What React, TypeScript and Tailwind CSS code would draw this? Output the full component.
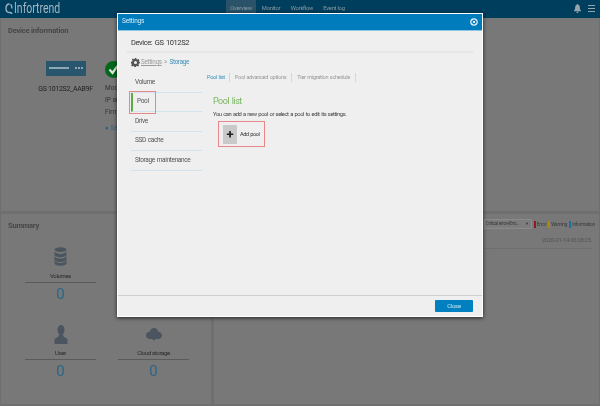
import React from "react";

function Stat({ label, icon }: { label: string; icon: React.ReactNode }) {
  return (
    <div className="flex w-[71px] flex-col items-center">
      <div className="flex h-[22px] items-center justify-center">{icon}</div>
      <div className="mt-[3px] h-[10px] text-[6px] leading-[10px] tracking-[-0.35px] text-[#2a2a2a]">{label}</div>
      <div className="mt-[1px] h-px w-full bg-[#5a5a5a]" />
      <div className="mt-[1px] text-[15px] leading-[20px] text-[#2a6685]">0</div>
    </div>
  );
}

function Db() {
  return (
    <svg width="13" height="19" viewBox="0 0 13 19" fill="#4a5560">
      <ellipse cx="6.5" cy="2.6" rx="6" ry="2.4" />
      <path d="M.5 4.6c1 1.6 3.4 2.3 6 2.3s5-.7 6-2.3v3.2c0 1.4-2.7 2.5-6 2.5s-6-1.1-6-2.5z" />
      <path d="M.5 9.2c1 1.6 3.4 2.3 6 2.3s5-.7 6-2.3v3.2c0 1.4-2.7 2.5-6 2.5s-6-1.1-6-2.5z" />
      <path d="M.5 13.6c1 1.6 3.4 2.3 6 2.3s5-.7 6-2.3v2.6c0 1.4-2.7 2.5-6 2.5s-6-1.1-6-2.5z" />
    </svg>
  );
}

export default function App() {
  return (
    <div className="relative h-[406px] w-[600px] overflow-hidden bg-[#787878] font-['Roboto',sans-serif] blur-[0.3px]">
      {/* top bar */}
      <header className="flex h-[17.5px] items-center bg-[#003e5e]">
        <div className="ml-[5px] flex w-[221px] items-center text-[#a3b6c2]">
          <svg width="8" height="11" viewBox="0 0 8 11" fill="none" stroke="#a3b6c2" strokeWidth="1.300">
            <path d="M4.500 1C2.300 1 1 2.800 1 5.500S2.300 9.500 4.500 9.500c1 0 2 .6 2.800 1.200M5.500 1.200C6.600 2 7 3.500 7 5.500" />
          </svg>
          <span className="ml-[1px] inline-block origin-left scale-x-[0.75] text-[14px] leading-[17px]">Infortrend</span>
        </div>
        <nav className="flex h-full text-[5.800px] tracking-[-0.25px] text-[#8a9aa4]">
          <span className="flex w-[30px] items-center justify-center bg-[#2a5268]">Overview</span>
          <span className="flex w-[30px] items-center justify-center">Monitor</span>
          <span className="flex w-[32px] items-center justify-center">Workflow</span>
          <span className="flex w-[32px] items-center justify-center">Event log</span>
        </nav>
        <div className="ml-auto mr-[5px] flex items-center gap-[7px]">
          <svg width="7" height="9" viewBox="0 0 7 9" fill="#97a4ac">
            <path d="M3.5 0c.5 0 .8.3.8.8C5.4 1.200 5.800 2 5.800 3.200c0 1.800.4 2.500 1.200 3.400v.6H0v-.6c.8-.9 1.200-1.600 1.200-3.400C1.200 2 1.600 1.200 2.700.8c0-.5.3-.8.800-.8zM2.500 7.700h2c0 .8-.4 1.300-1 1.300s-1-.5-1-1.300z" />
          </svg>
          <div className="flex h-[7px] w-[7px] flex-col justify-between">
            <div className="h-px w-full bg-[#97a4ac]" />
            <div className="h-px w-full bg-[#97a4ac]" />
            <div className="h-px w-full bg-[#97a4ac]" />
          </div>
        </div>
      </header>

      {/* dashboard */}
      <main className="grid h-[388.5px] grid-cols-[209.5px_1fr] grid-rows-[193.500px_1fr] gap-[3px] bg-[#6f6f6f] px-[1px] pb-[2px]">
        <section className="col-span-2 flex flex-col bg-[#787878] px-[7px] pt-[7px]">
          <h2 className="text-[7.500px] font-bold leading-[11px] tracking-[-0.2px] text-[#474747]">Device information</h2>
          <div className="mt-[25px] flex">
            <div className="ml-[30px] flex w-[55px] flex-col items-center">
              <div className="flex h-[15px] w-[40px] items-center justify-between bg-[#27566e] px-[3px]">
                <div className="h-[1.500px] w-[20px] bg-[#8fa6b3]" />
                <div className="flex gap-[1px]">
                  <div className="h-[2px] w-[2px] bg-[#8fa6b3]" />
                  <div className="h-[2px] w-[2px] bg-[#8fa6b3]" />
                  <div className="h-[2px] w-[2px] bg-[#8fa6b3]" />
                </div>
              </div>
              <div className="mt-[8px] whitespace-nowrap text-[7px] leading-[10px] tracking-[-0.3px] text-[#222]">GS 1012S2_AAB9F</div>
            </div>
            <div className="ml-[12px] flex flex-col text-[6.500px] leading-[12px] text-[#333]">
              <svg width="17" height="17" viewBox="0 0 17 17">
                <circle cx="8.500" cy="8.500" r="8.500" fill="#03671c" />
                <path d="M4.500 8.500l3 3.500 5-7" fill="none" stroke="#dfe8df" strokeWidth="2.200" />
              </svg>
              <div className="mt-[4px]">Model</div>
              <div>IP address</div>
              <div>Firmware</div>
              <div className="mt-[4px] text-[#2a6685]">● Settings</div>
            </div>
          </div>
        </section>

        <section className="bg-[#787878] px-[7px] pt-[5.500px]">
          <h2 className="text-[7.500px] font-bold leading-[11px] tracking-[-0.2px] text-[#474747]">Summary</h2>
          <div className="ml-[17px] mt-[15px] grid w-[164px] grid-cols-[71px_71px] gap-x-[22px] gap-y-[19.500px]">
            <Stat label="Volumes" icon={<Db />} />
            <Stat label="" icon={null} />
            <Stat
              label="User"
              icon={
                <svg width="14" height="19" viewBox="0 0 14 19" fill="#4a5560">
                  <ellipse cx="7" cy="5" rx="3.500" ry="5" />
                  <path d="M5 9.500h4l.5 2 4 2.500v5H.5v-5l4-2.500z" />
                </svg>
              }
            />
            <Stat
              label="Cloud storage"
              icon={
                <svg width="16" height="13" viewBox="0 0 16 13" fill="#4a5560">
                  <path d="M8 0c2.200 0 3.800 1.500 4 3.500 2.200.2 4 1.800 4 4S14.300 11 12 11H9.500L8 13 6.500 11H4C1.700 11 0 9.700 0 7.500s1.800-3.800 4-4C4.200 1.500 5.800 0 8 0z" />
                </svg>
              }
            />
          </div>
        </section>

        <section className="flex flex-col bg-[#787878] pr-[4px] pt-[5px]">
          <div className="flex items-center justify-end gap-[2px] text-[4.700px] tracking-[-0.15px] text-[#3a3a3a]">
            <div className="flex h-[10px] w-[48px] items-center justify-between overflow-hidden border border-[#8a8a8a] bg-[#7d7d7d] pl-[1px] pr-[2px]">
              <span className="whitespace-nowrap text-[4.500px] tracking-[-0.25px]">Critical error+Erro...</span>
              <span className="text-[4px]">▼</span>
            </div>
            <span className="border-l-2 border-[#8c1c1c] pl-[1px] leading-[7px]">Error</span>
            <span className="border-l-2 border-[#a88a14] pl-[1px] leading-[7px]">Warning</span>
            <span className="border-l-2 border-[#1d6f9e] pl-[1px] leading-[7px]">Information</span>
          </div>
          <div className="mr-[3px] mt-[5px] border-b border-[#6f6f6f] pb-[3px] pr-[1px] text-right text-[6px] leading-[11px] tracking-[-0.3px] text-[#555]">
            2020-01-14 06:28:25
          </div>
        </section>
      </main>

      {/* dialog over the dimmed dashboard */}
      <div className="absolute left-[117px] top-[13px] flex h-[304px] w-[366px] flex-col border border-white bg-[#efefef] shadow-[0_1px_4px_rgba(0,0,0,0.7)]">
        <div className="flex h-[17px] shrink-0 items-center justify-between border-b border-[#8fc4e0] bg-[#007bbb] pl-[4px] pr-[4px] text-[6.500px] tracking-[-0.2px] text-[#d8ecf6]">
          <span>Settings</span>
          <svg width="8" height="8" viewBox="0 0 8 8" fill="none" stroke="#e8f4fa">
            <circle cx="4" cy="4" r="3.200" strokeWidth="1.200" />
            <path d="M2.700 2.700l2.600 2.600M5.300 2.700L2.700 5.300" strokeWidth="1" />
          </svg>
        </div>

        <div className="flex min-h-0 flex-1 flex-col pl-[9px] pr-[9px]">
          <div className="flex h-[22px] shrink-0 items-center border-b-2 border-[#e6e6e6] pl-[4px] pt-[3px] text-[7.500px] tracking-[-0.4px] [word-spacing:1px] text-[#333]">
            Device: GS 1012S2
          </div>
          <div className="flex h-[17px] shrink-0 items-center pl-[4px] pt-[2px] text-[6.300px] tracking-[-0.3px] text-[#999]">
            <svg width="9" height="9" viewBox="0 0 24 24" fill="#555" className="mr-[1px]">
              <path d="M10 0h4l.7 3.300 2.300 1 2.900-1.800 2.800 2.800-1.800 2.900 1 2.300L24 10v4l-3.100.7-1 2.300 1.800 2.900-2.800 2.800-2.900-1.800-2.300 1-.7 3.100h-4l-.7-3.100-2.300-1-2.900 1.800-2.800-2.800 1.800-2.900-1-2.300L0 14v-4l3.100-.7 1-2.300-1.800-2.900 2.800-2.800 2.900 1.800 2.300-1zM12 8a4 4 0 100 8 4 4 0 000-8z" />
            </svg>
            <span className="underline">Settings</span>
            <span className="mx-[2.500px]">&gt;</span>
            <span className="text-[#3a8fb8]">Storage</span>
          </div>

          <div className="mt-[3px] flex">
            <aside className="ml-[4px] w-[71px] shrink-0 text-[6.500px] tracking-[-0.35px] [word-spacing:0.5px] text-[#555]">
              <div className="flex h-[20px] items-center border-b border-[#d3e3ee] pl-[4px] pt-[1px]">Volume</div>
              <div className="relative -ml-[2px] h-[19px] pl-[2px]">
                <div className="flex h-full items-center border-b border-b-[#d3e3ee] border-l-2 border-l-[#5eab45] pl-[4px]">Pool</div>
                <div className="absolute left-0 top-[-2px] h-[23px] w-[27px] border-[1.500px] border-[#e8878a]" />
              </div>
              <div className="flex h-[20px] items-center border-b border-[#d3e3ee] pl-[4px]">Drive</div>
              <div className="flex h-[19px] items-center border-b border-[#d3e3ee] pl-[4px]">SSD cache</div>
              <div className="flex h-[20px] items-center whitespace-nowrap border-b border-[#d3e3ee] pl-[4px]">Storage maintenance</div>
            </aside>

            <div className="ml-[5px] flex-1">
              <div className="flex h-[9px] items-center text-[5.600px] tracking-[-0.3px] [word-spacing:0.5px] text-[#999]">
                <span className="border-r border-[#d5d5d5] pr-[4px] text-[#3a8fb8]">Pool list</span>
                <span className="border-r border-[#d5d5d5] pl-[5px] pr-[5px]">Pool advanced options</span>
                <span className="border-r border-[#d5d5d5] pl-[5px] pr-[5px]">Tier migration schedule</span>
              </div>
              <h3 className="ml-[6px] mt-[13px] text-[9px] leading-[13px] tracking-[-0.5px] [word-spacing:1px] text-[#7bb662]">Pool list</h3>
              <p className="ml-[6px] mt-[1px] whitespace-nowrap text-[5.800px] leading-[10px] tracking-[-0.42px] [word-spacing:0.6px] text-[#444]">
                You can add a new pool or select a pool to edit its settings.
              </p>
              <div className="ml-[11px] mt-[2px] flex h-[26px] w-[47px] items-center border border-[#e8878a] pl-[4px]">
                <div className="flex h-[19px] w-[14px] items-center justify-center bg-[#c9c9c9] text-[13px] font-bold leading-none text-[#222]">+</div>
                <span className="ml-[3px] text-[5.600px] tracking-[-0.4px] [word-spacing:0.5px] text-[#333]">Add pool</span>
              </div>
            </div>
          </div>
        </div>

        <div className="flex h-[21px] shrink-0 items-center justify-end border-t border-[#cfcfcf] pr-[9px]">
          <button className="h-[12px] w-[38px] rounded-[1px] bg-[#0080c0] text-[5.800px] leading-[12px] tracking-[-0.2px] text-[#cfe6f2]">Close</button>
        </div>
      </div>
    </div>
  );
}
